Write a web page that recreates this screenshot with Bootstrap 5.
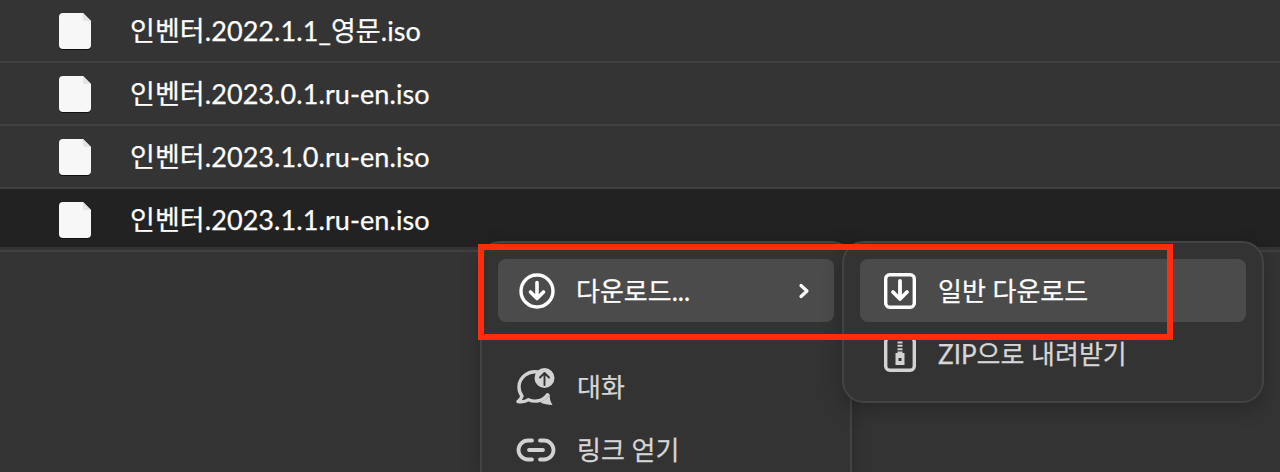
<!doctype html>
<html lang="ko"><head><meta charset="utf-8">
<link href="https://cdn.jsdelivr.net/npm/bootstrap@5.3.0/dist/css/bootstrap.min.css" rel="stylesheet">
<style>
html,body{height:472px;overflow:hidden}
body{background:#343434;font-family:Lato,"Noto Sans CJK KR",sans-serif;color:#fff;position:relative;-webkit-text-stroke:.25px currentColor}
.file-row{height:63px;border-bottom:2px solid #414141;padding-left:59px;gap:39px;font-size:27px;line-height:1;letter-spacing:.07px}
.file-row.picked{background:linear-gradient(#222 0 58px,#343434 58px)}
.doc{width:32px;height:36px;flex:none;filter:drop-shadow(0 1px 0 #111)}
.pop{position:absolute;top:241px;background:#333;border:2px solid #434343;box-shadow:0 6px 20px rgba(0,0,0,.25)}
.pop-main{left:480px;width:372px;height:232px;border-radius:20px 20px 0 0;padding:16px;border-bottom:0}
.pop-sub{left:842px;width:422px;height:162px;border-radius:22px;padding:16px;z-index:2}
.entry{height:63px;border-radius:8px;gap:21px;padding-left:18px;font-size:26px;line-height:1;color:#d6d6d6}
.entry.on{background:#4b4b4b;color:#fff;padding-left:21px}
.entry svg{flex:none}
.pop-sub .entry{padding-left:24px;gap:22px}
.sep{height:0;margin-top:33px}
.chev{margin-left:auto;margin-right:24px}
.frame{position:absolute;left:478px;top:244px;width:695px;height:96px;border:6px solid #ff2d0b;z-index:3}
</style></head><body>
<div class="file-list">
<div class="file-row d-flex align-items-center"><svg class="doc" viewBox="0 0 32 36"><path d="M4 0h20l8 8v24a4 4 0 0 1-4 4H4a4 4 0 0 1-4-4V4a4 4 0 0 1 4-4z" fill="#f7f7f7"/><path d="M24 0l8 8h-6a2 2 0 0 1-2-2z" fill="#e4e4e4"/></svg><span>인벤터.2022.1.1_영문.iso</span></div>
<div class="file-row d-flex align-items-center"><svg class="doc" viewBox="0 0 32 36"><path d="M4 0h20l8 8v24a4 4 0 0 1-4 4H4a4 4 0 0 1-4-4V4a4 4 0 0 1 4-4z" fill="#f7f7f7"/><path d="M24 0l8 8h-6a2 2 0 0 1-2-2z" fill="#e4e4e4"/></svg><span>인벤터.2023.0.1.ru-en.iso</span></div>
<div class="file-row d-flex align-items-center"><svg class="doc" viewBox="0 0 32 36"><path d="M4 0h20l8 8v24a4 4 0 0 1-4 4H4a4 4 0 0 1-4-4V4a4 4 0 0 1 4-4z" fill="#f7f7f7"/><path d="M24 0l8 8h-6a2 2 0 0 1-2-2z" fill="#e4e4e4"/></svg><span>인벤터.2023.1.0.ru-en.iso</span></div>
<div class="file-row picked d-flex align-items-center"><svg class="doc" viewBox="0 0 32 36"><path d="M4 0h20l8 8v24a4 4 0 0 1-4 4H4a4 4 0 0 1-4-4V4a4 4 0 0 1 4-4z" fill="#f7f7f7"/><path d="M24 0l8 8h-6a2 2 0 0 1-2-2z" fill="#e4e4e4"/></svg><span>인벤터.2023.1.1.ru-en.iso</span></div>
</div>
<div class="pop pop-main">
<div class="entry on d-flex align-items-center">
<svg width="36" height="36" viewBox="0 0 36 36" fill="none" stroke="#fff"><circle cx="18" cy="18" r="16" stroke-width="3.400"/><path d="M18 9.500v16M11.500 19l6.500 6.500 6.500-6.500" stroke-width="3.600" stroke-linecap="round" stroke-linejoin="round"/></svg>
<span>다운로드...</span>
<svg class="chev" width="12" height="16" viewBox="0 0 12 16" fill="none" stroke="#fff" stroke-width="3.200" stroke-linecap="round" stroke-linejoin="round"><path d="M3 2.500 9 8l-6 5.500"/></svg>
</div>
<div class="sep"></div>
<div class="entry d-flex align-items-center">
<svg width="40" height="40" viewBox="0 0 40 40" fill="none" stroke="#d2d2d2"><path d="M24 5.500C13 2.500 3 10 3 20c0 3.500 1 6.500 3 9-.5 2-2 4-4 5.500 3.500.8 7.500.2 10.500-1.800 7 3 15 1 19-5" stroke-width="3.400" stroke-linecap="round" stroke-linejoin="round"/><path d="M34 27c-.8 4 .5 8 2.500 11-4.500 0-9-.8-12.500-3 4.500-1.200 8-4 10-8z" fill="#d2d2d2" stroke="none"/><circle cx="28.500" cy="11" r="10" fill="#d2d2d2" stroke="none"/><path d="M28.500 18V6M24 10.500l4.500-4.500 4.500 4.500" stroke="#333" stroke-width="1.900" stroke-linecap="round" stroke-linejoin="round"/></svg>
<span>대화</span>
</div>
<div class="entry d-flex align-items-center">
<svg width="40" height="24" viewBox="0 0 40 24" fill="none" stroke="#d2d2d2" stroke-width="3.800" stroke-linecap="round"><path d="M16 2.500H12a9.500 9.500 0 0 0 0 19h4M24 2.500h4a9.500 9.500 0 0 1 0 19h-4M13 12h14"/></svg>
<span>링크 얻기</span>
</div>
</div>
<div class="pop pop-sub">
<div class="entry on d-flex align-items-center">
<svg width="32" height="36" viewBox="0 0 32 36" fill="none" stroke="#fff"><rect x="1.700" y="1.700" width="28.600" height="32.600" rx="4" stroke-width="3.400"/><path d="M16 8v18M9 19l7 7 7-7" stroke-width="3.800" stroke-linecap="round" stroke-linejoin="round"/></svg>
<span>일반 다운로드</span>
</div>
<div class="entry d-flex align-items-center">
<svg width="32" height="36" viewBox="0 0 32 36" fill="none" stroke="#d2d2d2"><rect x="1.700" y="1.700" width="28.600" height="32.600" rx="4" stroke-width="3.400"/><path d="M16 2v15" stroke-width="5" stroke-dasharray="2 1.400"/><rect x="11.500" y="17" width="9" height="12" fill="#d2d2d2" stroke="none"/><rect x="14.500" y="22" width="3" height="3" fill="#333" stroke="none"/></svg>
<span>ZIP으로 내려받기</span>
</div>
</div>
<div class="frame"></div>
<script src="https://cdn.jsdelivr.net/npm/bootstrap@5.3.0/dist/js/bootstrap.bundle.min.js"></script>
</body></html>
